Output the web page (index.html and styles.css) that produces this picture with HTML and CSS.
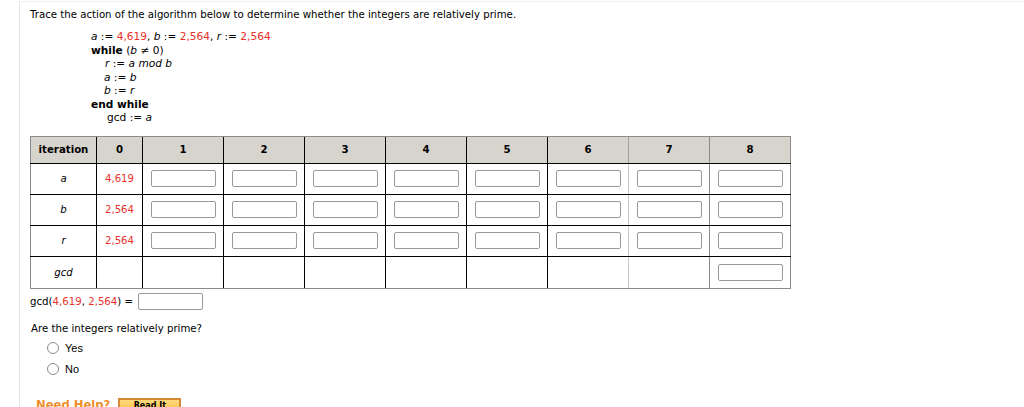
FILE: index.html
```html
<!DOCTYPE html>
<html>
<head>
<meta charset="utf-8">
<link rel="stylesheet" href="styles.css">
</head>
<body>
<div class="page">
  <p class="prompt">Trace the action of the algorithm below to determine whether the integers are relatively prime.</p>
  <div class="algo">
    <div class="ln"><i>a</i> := <span class="red">4,619</span>, <i>b</i> := <span class="red">2,564</span>, <i>r</i> := <span class="red">2,564</span></div>
    <div class="ln"><b>while</b> (<i>b</i> ≠ 0)</div>
    <div class="ln ind1"><i>r</i> := <i>a</i> <i>mod</i> <i>b</i></div>
    <div class="ln ind2"><i>a</i> := <i>b</i></div>
    <div class="ln ind2"><i>b</i> := <i>r</i></div>
    <div class="ln"><b>end while</b></div>
    <div class="ln ind3">gcd := <i>a</i></div>
  </div>
  <table class="trace">
    <thead>
      <tr><th class="c-it">iteration</th><th class="c-0">0</th><th>1</th><th>2</th><th>3</th><th>4</th><th>5</th><th>6</th><th class="c7">7</th><th class="c8">8</th></tr>
    </thead>
    <tbody>
      <tr><td><i>a</i></td><td class="red">4,619</td><td><span class="box"></span></td><td><span class="box"></span></td><td><span class="box"></span></td><td><span class="box"></span></td><td><span class="box"></span></td><td><span class="box"></span></td><td class="c7"><span class="box"></span></td><td class="c8"><span class="box"></span></td></tr>
      <tr><td><i>b</i></td><td class="red">2,564</td><td><span class="box"></span></td><td><span class="box"></span></td><td><span class="box"></span></td><td><span class="box"></span></td><td><span class="box"></span></td><td><span class="box"></span></td><td class="c7"><span class="box"></span></td><td class="c8"><span class="box"></span></td></tr>
      <tr><td><i>r</i></td><td class="red">2,564</td><td><span class="box"></span></td><td><span class="box"></span></td><td><span class="box"></span></td><td><span class="box"></span></td><td><span class="box"></span></td><td><span class="box"></span></td><td class="c7"><span class="box"></span></td><td class="c8"><span class="box"></span></td></tr>
      <tr class="last"><td><i>gcd</i></td><td></td><td></td><td></td><td></td><td></td><td></td><td></td><td class="c7"></td><td class="c8"><span class="box"></span></td></tr>
    </tbody>
  </table>
  <div class="answer">gcd(<span class="red">4,619</span>, <span class="red">2,564</span>) = <span class="box"></span></div>
  <p class="question">Are the integers relatively prime?</p>
  <div class="opts">
    <label class="opt"><span class="radio"></span>Yes</label>
    <label class="opt"><span class="radio"></span>No</label>
  </div>
  <div class="help">
    <span class="need">Need Help?</span>
    <span class="readit">Read It</span>
  </div>
</div>
</body>
</html>
```

FILE: styles.css
```css
html, body {
  margin: 0;
  padding: 0;
  background: #fff;
}
body {
  font-family: "DejaVu Sans", Verdana, sans-serif;
  font-size: 10.2px;
  color: #000;
  overflow: hidden;
  height: 407px;
}
.page {
  margin-left: 19px;
  margin-top: 1px;
  border-left: 1px solid #e6e6e6;
  border-top: 1px solid #f0f0f0;
  padding: 0 0 0 10px;
  height: 420px;
}
.prompt {
  margin: 0;
  padding-top: 6px;
  line-height: 13px;
}
.red { color: #e8322b; }
.algo {
  margin: 9px 0 0 61px;
  font-size: 10.6px;
}
.ln {
  line-height: 13.5px;
  height: 13.5px;
}
.ind1 { padding-left: 14px; }
.ind2 { padding-left: 13px; }
.ind3 { padding-left: 16px; }
.trace {
  margin-top: 11px;
  border-collapse: collapse;
  border: 1px solid #8c8c8c;
  table-layout: fixed;
  width: 761px;
}
.trace th {
  background: #d7d4cd;
  height: 26px;
  font-weight: bold;
  text-align: center;
  padding: 0;
  width: 80px;
  border-left: 1px solid #000;
  border-bottom: 1px solid #000;
  border-top: 1px solid #8c8c8c;
}
.trace th.c-it { width: 65px; border-left: 1px solid #8c8c8c; }
.trace th.c-0 { width: 45px; }
.trace td {
  height: 30px;
  text-align: center;
  padding: 0;
  border-left: 1px solid #000;
  border-bottom: 1px solid #000;
}
.trace td:first-child { border-left: 1px solid #8c8c8c; }
.trace tr.last td { border-bottom: 1px solid #8c8c8c; height: 31px; }
.trace td.c7 { border-left-color: #c8c8c8; }
.trace th.c7 { border-left-color: #a0a0a0; }
.trace td.c8, .trace th.c8 { border-left-color: #8c8c8c; }
.box {
  display: inline-block;
  vertical-align: middle;
  width: 63px;
  height: 15px;
  border: 1px solid #9a9a9a;
  border-radius: 2px;
  background: #fff;
}
.answer {
  margin-top: 3px;
  line-height: 19px;
  height: 19px;
}
.answer .box { margin-left: 2px; }
.question {
  margin: 11px 0 0 1px;
  line-height: 13px;
}
.opts {
  margin-top: 3px;
  padding-left: 17px;
  font-family: "Liberation Sans", Arial, sans-serif;
  font-size: 11px;
}
.opt {
  display: flex;
  align-items: center;
  height: 21px;
}
.radio {
  width: 10px;
  height: 10px;
  border: 1px solid #8a8a8a;
  border-radius: 50%;
  margin-right: 6px;
  background: #fff;
}
.help {
  display: flex;
  align-items: flex-start;
  margin-top: 14px;
  padding-left: 6px;
}
.need {
  font-family: "DejaVu Sans", Verdana, sans-serif;
  font-size: 11.6px;
  font-weight: bold;
  color: #ec8f2c;
  line-height: 16px;
  margin-top: 3px;
}
.readit {
  margin-left: 8px;
  width: 59px;
  height: 16px;
  border: 2px solid #d38a33;
  background: linear-gradient(#ffd87a, #f6b73c);
  font-size: 8px;
  font-weight: bold;
  text-align: center;
  line-height: 12px;
  margin-top: 4px;
}
```
